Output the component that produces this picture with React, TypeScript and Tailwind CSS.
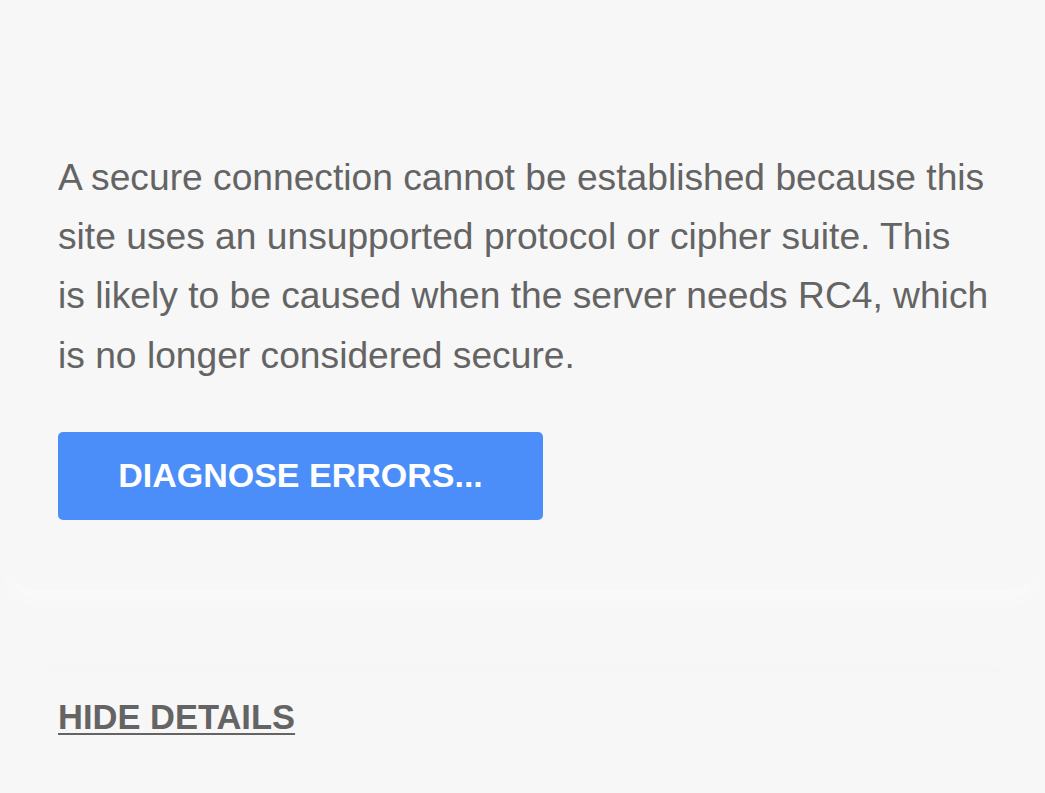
export default function App() {
  return (
    <div className="min-h-[793px] w-full overflow-hidden bg-[#f7f7f7] font-['Liberation_Sans',Arial,Helvetica,sans-serif] text-[#646464]">
      <div className="pl-[58px] pt-[148px]">
        <p className="whitespace-nowrap text-[37.2px] leading-[59.2px]">
          A secure connection cannot be established because this
          <br />
          site uses an unsupported protocol or cipher suite. This
          <br />
          is likely to be caused when the server needs RC4, which
          <br />
          is no longer considered secure.
        </p>
        <button className="mt-[47px] flex h-[88px] w-[485px] items-center justify-center rounded-[5px] bg-[#4c8ef9] text-[34px] font-bold text-white">
          DIAGNOSE ERRORS...
        </button>
      </div>
      <div className="mt-[30px] h-[40px] rounded-b-[60px] shadow-[0_14px_26px_-8px_rgba(255,255,255,0.6)]" />
      <div className="mx-[14px] mt-[80px] rounded-t-[50px] shadow-[0_-12px_24px_-10px_rgba(0,0,0,0.012)] pl-[44px] pt-[27px]">
        <a className="block text-[34.5px] font-bold leading-[40px] underline decoration-2 underline-offset-[4px]">
          HIDE DETAILS
        </a>
      </div>
    </div>
  );
}
